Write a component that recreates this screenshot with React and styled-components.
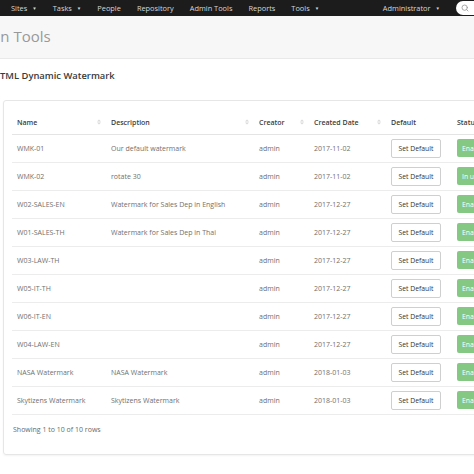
import styled, { createGlobalStyle } from "styled-components";
import { Search } from "lucide-react";

const GlobalStyle = createGlobalStyle`
  html, body {
    margin: 0;
    padding: 0;
    background: #fff;
    overflow: hidden;
  }
  body {
    font-family: "Open Sans", "Liberation Sans", sans-serif;
    width: 474px;
    height: 474px;
  }
`;

const Page = styled.div`
  width: 474px;
  height: 474px;
  overflow: hidden;
`;

const NavBar = styled.nav`
  height: 16px;
  background: #1c1c1c;
  display: flex;
  align-items: center;
  padding-left: 11px;
  gap: 16px;
  color: #d6d6d6;
  font-size: 7.4px;
`;

const NavItem = styled.span`
  display: flex;
  align-items: center;
  gap: 5px;
  white-space: nowrap;
  margin-left: ${(props) => (props.$push ? "auto" : "0")};
`;

const Caret = styled.span`
  font-size: 4.5px;
`;

const SearchBox = styled.div`
  width: 22px;
  height: 14px;
  margin-right: -4px;
  background: #fff;
  border-radius: 7px 0 0 7px;
  display: flex;
  align-items: center;
  padding-left: 5px;
  box-sizing: border-box;
  color: #999;
`;

const TitleBand = styled.div`
  height: 42px;
  background: #f7f7f7;
  border-bottom: 1px solid #e9e9e9;
  display: flex;
  align-items: center;
  overflow: hidden;
`;

const PageTitle = styled.h1`
  margin: -3px 0 0 -36px;
  font-size: 15px;
  font-weight: 400;
  color: #999;
  white-space: nowrap;
`;

const SectionTitle = styled.h2`
  margin: 0 0 0 -7px;
  height: 30px;
  padding-top: 1px;
  display: flex;
  align-items: center;
  font-size: 9.4px;
  font-weight: 600;
  color: #3a3a3a;
  white-space: nowrap;
`;

const Card = styled.div`
  margin: 10px -20px 0 3px;
  height: 355px;
  border: 1px solid #e6e6e6;
  border-radius: 3px;
  box-shadow: 0 1px 2px rgba(0, 0, 0, 0.05);
  padding: 10px 0 0 8px;
  box-sizing: border-box;
`;

const Table = styled.table`
  border-collapse: collapse;
  table-layout: fixed;
  width: 480px;
  font-size: 7px;
`;

const Th = styled.th`
  position: relative;
  box-sizing: border-box;
  text-align: left;
  font-weight: 600;
  color: #3c3c3c;
  height: 23px;
  padding: 0 5px;
  border-bottom: 1px solid #e4e4e4;
  width: ${(props) => props.$w}px;
`;

const SortIcon = styled.span`
  position: absolute;
  right: 5px;
  top: 50%;
  transform: translateY(-50%);
  display: flex;
  flex-direction: column;
  gap: 1px;
  & > i {
    display: block;
    width: 0;
    height: 0;
    border-left: 2px solid transparent;
    border-right: 2px solid transparent;
  }
  & > i:first-child {
    border-bottom: 2.5px solid #d8d8d8;
  }
  & > i:last-child {
    border-top: 2.5px solid #d8d8d8;
  }
`;

const Td = styled.td`
  box-sizing: border-box;
  height: 28px;
  padding: 0 5px;
  color: #707070;
  border-bottom: 1px solid #ececec;
  white-space: nowrap;
  overflow: hidden;
`;

const DefaultButton = styled.button`
  font-family: inherit;
  font-size: 6.8px;
  color: #333;
  background: #fff;
  border: 1px solid #cfcfcf;
  border-radius: 2px;
  width: 50px;
  height: 19px;
  padding: 0;
`;

const StatusButton = styled.button`
  font-family: inherit;
  font-size: 6.8px;
  color: #fff;
  background: #84c884;
  border: none;
  border-radius: 2px;
  width: 40px;
  height: 18px;
  padding: 0 0 0 5px;
  text-align: left;
  white-space: nowrap;
`;

const Footer = styled.div`
  margin-top: 10px;
  font-size: 7px;
  color: #6a6a6a;
  padding-left: 1px;
`;

const rows = [
  ["WMK-01", "Our default watermark", "admin", "2017-11-02", "Enabled"],
  ["WMK-02", "rotate 30", "admin", "2017-11-02", "In use"],
  ["W02-SALES-EN", "Watermark for Sales Dep in English", "admin", "2017-12-27", "Enabled"],
  ["W01-SALES-TH", "Watermark for Sales Dep in Thai", "admin", "2017-12-27", "Enabled"],
  ["W03-LAW-TH", "", "admin", "2017-12-27", "Enabled"],
  ["W05-IT-TH", "", "admin", "2017-12-27", "Enabled"],
  ["W06-IT-EN", "", "admin", "2017-12-27", "Enabled"],
  ["W04-LAW-EN", "", "admin", "2017-12-27", "Enabled"],
  ["NASA Watermark", "NASA Watermark", "admin", "2018-01-03", "Enabled"],
  ["Skytizens Watermark", "Skytizens Watermark", "admin", "2018-01-03", "Enabled"],
];

const columns = [
  { title: "Name", w: 94, sort: true },
  { title: "Description", w: 148, sort: true },
  { title: "Creator", w: 55, sort: true },
  { title: "Created Date", w: 77, sort: true },
  { title: "Default", w: 66 },
  { title: "Status", w: 40 },
];

function Sort() {
  return (
    <SortIcon>
      <i />
      <i />
    </SortIcon>
  );
}

export default function App() {
  return (
    <Page>
      <GlobalStyle />
      <NavBar>
        <NavItem>
          Sites <Caret>▼</Caret>
        </NavItem>
        <NavItem>
          Tasks <Caret>▼</Caret>
        </NavItem>
        <NavItem>People</NavItem>
        <NavItem>Repository</NavItem>
        <NavItem>Admin Tools</NavItem>
        <NavItem>Reports</NavItem>
        <NavItem>
          Tools <Caret>▼</Caret>
        </NavItem>
        <NavItem $push>
          Administrator <Caret>▼</Caret>
        </NavItem>
        <SearchBox>
          <Search size={8} strokeWidth={2.5} />
        </SearchBox>
      </NavBar>

      <TitleBand>
        <PageTitle>Admin Tools</PageTitle>
      </TitleBand>

      <SectionTitle>HTML Dynamic Watermark</SectionTitle>

      <Card>
        <Table>
          <thead>
            <tr>
              {columns.map((c) => (
                <Th key={c.title} $w={c.w}>
                  {c.title}
                  {c.sort && <Sort />}
                </Th>
              ))}
            </tr>
          </thead>
          <tbody>
            {rows.map((r) => (
              <tr key={r[0]}>
                <Td>{r[0]}</Td>
                <Td>{r[1]}</Td>
                <Td>{r[2]}</Td>
                <Td>{r[3]}</Td>
                <Td>
                  <DefaultButton>Set Default</DefaultButton>
                </Td>
                <Td>
                  <StatusButton>{r[4]}</StatusButton>
                </Td>
              </tr>
            ))}
          </tbody>
        </Table>
        <Footer>Showing 1 to 10 of 10 rows</Footer>
      </Card>
    </Page>
  );
}
